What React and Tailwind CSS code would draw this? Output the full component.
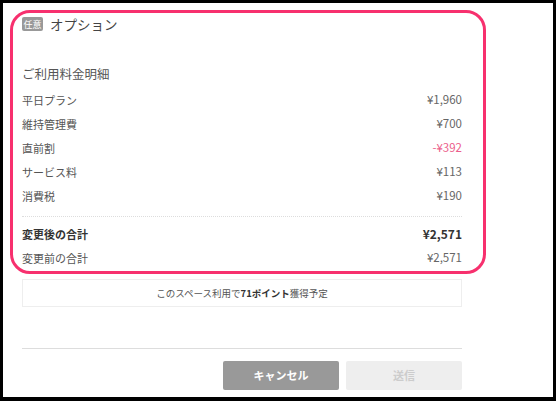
export default function App() {
  const rows = [
    { label: "平日プラン", value: "¥1,960" },
    { label: "維持管理費", value: "¥700" },
    { label: "直前割", value: "-¥392", discount: true },
    { label: "サービス料", value: "¥113" },
    { label: "消費税", value: "¥190" },
  ];

  return (
    <div
      className="w-[556px] h-[401px] bg-black pt-[3px] pl-[3px] pr-[3px] pb-[4px]"
      style={{ fontFamily: '"Noto Sans CJK JP", "Noto Sans", sans-serif' }}
    >
      <div className="relative w-full h-full bg-white pl-[19px] pt-[11px]">
        <div className="w-[440px]">
          {/* heading */}
          <div className="flex items-center gap-[7px] h-[20px]">
            <span className="flex items-center justify-center w-[21px] h-[14px] rounded-[2px] bg-[#999] text-white text-[9px] leading-none">
              任意
            </span>
            <span className="text-[13.5px] leading-[20px] text-[#444]">オプション</span>
          </div>

          {/* price detail */}
          <div className="mt-[30px] text-[12.5px] leading-[20px] text-[#555]">ご利用料金明細</div>
          <div className="mt-[4px]">
            {rows.map((r) => (
              <div key={r.label} className="flex justify-between items-center h-[24px] text-[11px]">
                <span className="text-[#555]">{r.label}</span>
                <span className={r.discount ? "text-[#ec5f8c] text-[11.5px]" : "text-[#666] text-[11.5px]"}>{r.value}</span>
              </div>
            ))}
          </div>
          <div className="mt-[8px] border-t border-dotted border-[#ddd]" />
          <div className="mt-[5px] flex justify-between items-center h-[24px] text-[11px] font-bold text-[#333]">
            <span>変更後の合計</span>
            <span className="text-[12px]">¥2,571</span>
          </div>
          <div className="flex justify-between items-center h-[24px] text-[11px] text-[#666]">
            <span className="text-[#555]">変更前の合計</span>
            <span className="text-[11.5px]">¥2,571</span>
          </div>

          {/* points */}
          <div className="mt-[9px] h-[28px] border border-[#eee] flex items-center justify-center text-[9.5px] text-[#555]">
            このスペース利用で<span className="font-bold text-[#333]">71ポイント</span>獲得予定
          </div>

          <div className="mt-[41px] border-t border-[#ddd]" />

          {/* buttons */}
          <div className="mt-[12px] flex justify-end gap-[7px]">
            <button className="w-[116px] h-[29px] rounded-[2px] bg-[#999] text-white text-[11px] font-bold">
              キャンセル
            </button>
            <button className="w-[116px] h-[29px] rounded-[2px] bg-[#eee] text-[#ccc] text-[11px] font-bold">
              送信
            </button>
          </div>
        </div>

        {/* highlight overlay */}
        <div className="absolute left-[7px] top-[7px] w-[476px] h-[264px] border-[3px] border-[#f7306e] rounded-[20px] pointer-events-none" />
      </div>
    </div>
  );
}
